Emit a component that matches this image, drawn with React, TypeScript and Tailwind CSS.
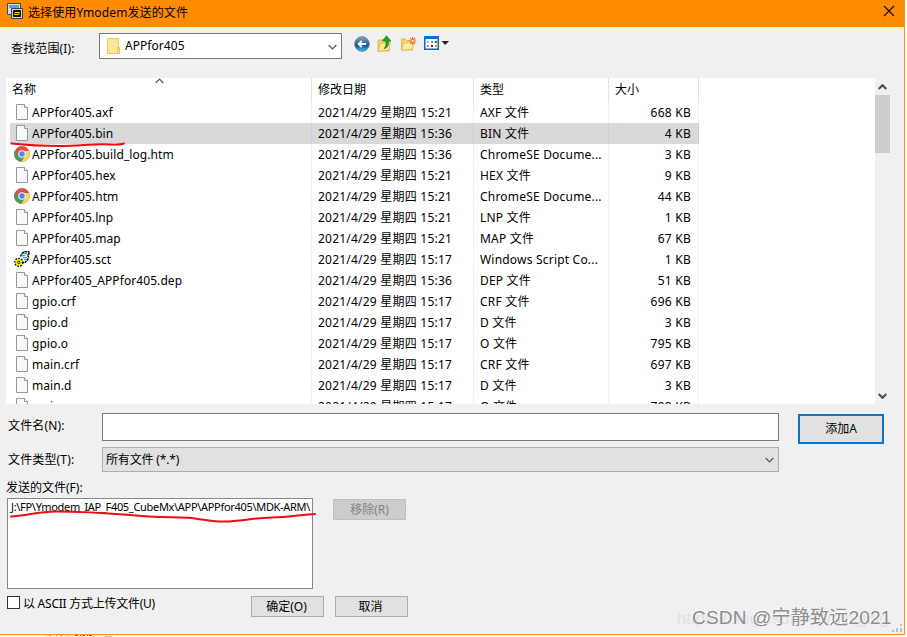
import React from "react";

type FileKind = "file" | "chrome" | "script";

interface FileEntry {
  name: string;
  kind: FileKind;
  time: string;
  type: string;
  size: string;
}

const files: FileEntry[] = [
  { name: "APPfor405.axf", kind: "file", time: "15:21", type: "AXF 文件", size: "668 KB" },
  { name: "APPfor405.bin", kind: "file", time: "15:36", type: "BIN 文件", size: "4 KB" },
  { name: "APPfor405.build_log.htm", kind: "chrome", time: "15:36", type: "ChromeSE Docume...", size: "3 KB" },
  { name: "APPfor405.hex", kind: "file", time: "15:21", type: "HEX 文件", size: "9 KB" },
  { name: "APPfor405.htm", kind: "chrome", time: "15:21", type: "ChromeSE Docume...", size: "44 KB" },
  { name: "APPfor405.lnp", kind: "file", time: "15:21", type: "LNP 文件", size: "1 KB" },
  { name: "APPfor405.map", kind: "file", time: "15:21", type: "MAP 文件", size: "67 KB" },
  { name: "APPfor405.sct", kind: "script", time: "15:17", type: "Windows Script Co...", size: "1 KB" },
  { name: "APPfor405_APPfor405.dep", kind: "file", time: "15:36", type: "DEP 文件", size: "51 KB" },
  { name: "gpio.crf", kind: "file", time: "15:17", type: "CRF 文件", size: "696 KB" },
  { name: "gpio.d", kind: "file", time: "15:17", type: "D 文件", size: "3 KB" },
  { name: "gpio.o", kind: "file", time: "15:17", type: "O 文件", size: "795 KB" },
  { name: "main.crf", kind: "file", time: "15:17", type: "CRF 文件", size: "697 KB" },
  { name: "main.d", kind: "file", time: "15:17", type: "D 文件", size: "3 KB" },
  { name: "main.o", kind: "file", time: "15:17", type: "O 文件", size: "798 KB" },
];

function FileIcon({ kind }: { kind: FileKind }) {
  if (kind === "chrome") {
    return (
      <svg width="16" height="16" viewBox="0 0 16 16" className="-mt-[2px]">
        <circle cx="8" cy="8" r="7.9" fill="#d2544a" />
        <path d="M1.1 4.1A7.9 7.9 0 0 0 7.3 15.9L11.2 9.8 8 8 4.8 9.8Z" fill="#4c9a62" />
        <path d="M15.300 5A7.900 7.900 0 0 1 7.200 15.900L11.300 9.800 10 5Z" fill="#f7d567" />
        <circle cx="8" cy="8" r="3.8" fill="#f4f4f4" />
        <circle cx="8" cy="8" r="2.7" fill="#4f86ec" />
      </svg>
    );
  }
  if (kind === "script") {
    return (
      <svg width="16" height="16" viewBox="0 0 16 16" className="-mt-[1px]">
        <path d="M8 1.5h6.500L13 4l2 2v4l-3 2H8l1-3-2-3Z" fill="#fff" />
        <path
          d="M6.500 5.500 8 2.500 10 .800h5.500M15.500 2 13.500 4 14.500 6 13.500 9 11 11.500H9"
          fill="none"
          stroke="#000"
          strokeWidth="1.500"
          strokeDasharray="2.500 .7"
        />
        <path d="M9 2.700h4M7.500 4.700h4M9 6.700h4M10 8.700h3" stroke="#2bb3c0" strokeWidth="1.300" />
        <circle cx="4.800" cy="11.300" r="3.900" fill="#f7ee00" stroke="#000" strokeWidth="1.500" strokeDasharray="1.800 1.100" />
        <circle cx="4.800" cy="11.300" r="3.200" fill="#f7ee00" />
        <circle cx="4.800" cy="11.300" r="1.200" fill="#fff" stroke="#000" />
      </svg>
    );
  }
  return (
    <svg width="16" height="16" viewBox="0 0 16 16" className="-mt-[2px]">
      <path d="M2.5 .5h8l3 3v12h-11Z" fill="#f8fafa" stroke="#979797" />
      <path d="M10.5 .5v3h3" fill="#fff" stroke="#979797" />
    </svg>
  );
}

function Chevron({ up = false, bold = false }: { up?: boolean; bold?: boolean }) {
  return (
    <svg width="9" height="6" viewBox="0 0 9 6" className="shrink-0">
      <path
        d={up ? "M.7 5 4.5 1.2 8.3 5" : "M.7 1 4.5 4.8 8.3 1"}
        fill="none"
        stroke={bold ? "#505050" : "#555"}
        strokeWidth={bold ? 2.2 : 1.2}
      />
    </svg>
  );
}

function TitleBar() {
  return (
    <div className="flex h-[27px] items-center bg-[#ff8c00] pl-[7px] pr-[9px]">
      <svg width="16" height="16" viewBox="0 0 16 16" className="-mt-[5px]">
        <path d="M.5 .5h13v11H.5Z" fill="#d9dde2" stroke="#34495f" />
        <path d="M2 2h10v3H2Z" fill="#5f9bff" />
        <path d="M4.5 5.5h11v10h-11Z" fill="#d5d5d5" stroke="#35404d" />
        <path d="M6.5 7.5h7v6h-7Z" fill="#111" stroke="#111" />
        <path d="M8 9h5l-1 3H7Z" fill="#ffd23c" />
        <path d="M8 10.5h4" stroke="#222" />
      </svg>
      <span className="-mt-[1px] ml-[5px] flex-1 tracking-[0.12px]">选择使用Ymodem发送的文件</span>
      <svg width="12" height="12" viewBox="0 0 12 12" className="-mt-[5px]">
        <path d="M1 1 11 11M11 1 1 11" stroke="#111" strokeWidth="1.2" />
      </svg>
    </div>
  );
}

function LookIn() {
  return (
    <div className="flex h-[51px] items-start pl-[11px] pt-[6px]">
      <span className="mt-[7px] w-[88px] tracking-[0.15px]">查找范围(I):</span>
      <div className="flex h-[26px] w-[243px] items-center border border-[#7a7a7a] bg-white pl-[7px] pr-[4px]">
        <svg width="13" height="16" viewBox="0 0 13 16">
          <path d="M.5 .5h11v15H.5Z" fill="#ffe69a" stroke="#eccb56" />
          <path d="M10.5 9.5h2v6h-2Z" fill="#ffe080" stroke="#e6c34d" />
        </svg>
        <span className="ml-[5px] flex-1 tracking-[0.05px]">APPfor405</span>
        <span className="mt-[2px] flex">
          <Chevron />
        </span>
      </div>
      <div className="ml-[12px] mt-[3px] flex items-start">
        <svg width="16" height="16" viewBox="0 0 16 16">
          <defs>
            <linearGradient id="back" x1="0" y1="0" x2="0" y2="1">
              <stop offset="0" stopColor="#8fa9c0" />
              <stop offset=".48" stopColor="#2b6193" />
              <stop offset=".6" stopColor="#0a5d9c" />
              <stop offset="1" stopColor="#3ac6f2" />
            </linearGradient>
          </defs>
          <circle cx="8" cy="8" r="7.4" fill="url(#back)" stroke="#6d8599" strokeWidth=".8" />
          <path d="M12.3 8H4.8M7.8 4.9 4.6 8l3.2 3.1" fill="none" stroke="#fff" strokeWidth="1.8" />
        </svg>
        <svg width="16" height="18" viewBox="0 0 16 18" className="-mt-[1px] ml-[7px]">
          <path d="M1 5h4l1-1h6v12H1Z" fill="#f5d668" stroke="#d8b548" strokeWidth=".8" />
          <path d="M1 16.500 3 8h5l1-1h4.500L12 15Z" fill="#ffe994" stroke="#d8b548" strokeWidth=".8" />
          <path d="M7 13.500c2-1.500 2.300-4 1.800-7.500H5.600L9.500 .8 13.800 6h-2.400c.3 5-1 7-4.400 7.500Z" fill="#26a326" stroke="#16791b" strokeWidth=".7" />
        </svg>
        <svg width="17" height="16" viewBox="0 0 17 16" className="ml-[7px]">
          <path d="M1.500 3h4l1 1.500h6V14h-11Z" fill="#f4d46c" stroke="#d6b24b" strokeWidth=".8" />
          <path d="M1.500 14.500 3.500 7H8l1-1h5l-1.500 7Z" fill="#ffeaa0" stroke="#dfbb52" strokeWidth=".8" />
          <path d="M12.500 1v8M8.800 5h7.500M10 2.200l5.400 5.400M15.300 2 10 7.600" stroke="#f6663a" strokeWidth="1.200" />
          <circle cx="12.500" cy="5" r="1.300" fill="#ffe17b" />
        </svg>
        <svg width="25" height="15" viewBox="0 0 25 15" className="ml-[7px]">
          <path d="M.75 .75h13.500v12.500H.75Z" fill="#fff" stroke="#0867c8" strokeWidth="1.500" />
          <path d="M0 0h15v3H0Z" fill="#0b6ed1" />
          <path d="M3 5h2v2H3Z" fill="#b0b0bd" />
          <path d="M7 5h2v2H7Z" fill="#9090c8" />
          <path d="M11 5h2v2h-2Z" fill="#208040" />
          <path d="M3 9h2v2H3Z" fill="#ff7356" />
          <path d="M7 9h2v2H7Z" fill="#123f9c" />
          <path d="M11 9h2v2h-2Z" fill="#d5a700" />
          <path d="M17.500 5h7.500l-3.800 4Z" fill="#222" />
        </svg>
      </div>
    </div>
  );
}

function FileList() {
  return (
    <div className="ml-[6px] mr-[14px] flex h-[326px]">
      <div className="w-[869px] overflow-hidden bg-white">
        <div className="flex h-[24px] w-[693px] leading-[24px]">
          <div className="relative w-[306px] border-r border-[#e2e2e2] pl-[6px]">
            名称
            <span className="absolute left-[149px] top-0 flex">
              <Chevron up />
            </span>
          </div>
          <div className="w-[162px] border-r border-[#e2e2e2] pl-[6px]">修改日期</div>
          <div className="w-[135px] border-r border-[#e2e2e2] pl-[6px]">类型</div>
          <div className="w-[90px] border-r border-[#e2e2e2] pl-[6px]">大小</div>
        </div>
        {files.map((file, index) => (
          <div key={file.name} className="flex h-[21px] w-[693px] pl-[4px] leading-[22px]">
            <div
              className={`flex w-full whitespace-nowrap ${
                index === 1 ? "bg-[#d9d9d9] *:border-[#c5d2dc]" : "*:border-[#eaf2fb]"
              }`}
            >
              <div className="flex h-[21px] w-[302px] items-center border-r pl-[4px]">
                <FileIcon kind={file.kind} />
                <span className="ml-[2px] leading-[20px] tracking-[0.08px]">{file.name}</span>
              </div>
              <div className="h-[21px] w-[162px] border-r pl-[6px] tracking-[0.22px]">
                2021/4/29 星期四 {file.time}
              </div>
              <div className="h-[21px] w-[135px] border-r pl-[6px] tracking-[0.2px]">{file.type}</div>
              <div className="h-[21px] w-[90px] border-r pr-[7px] text-right tracking-[0.25px]">{file.size}</div>
            </div>
          </div>
        ))}
      </div>
      <div className="flex w-[15px] flex-col items-center justify-between pb-[5px] pt-[6px]">
        <div className="flex w-full flex-col items-center gap-[5px]">
          <Chevron up bold />
          <div className="h-[58px] w-full bg-[#cdcdcd]" />
        </div>
        <Chevron bold />
      </div>
    </div>
  );
}

function FileFields() {
  return (
    <div className="flex h-[75px] pl-[8px] pt-[9px]">
      <div className="w-[94px] tracking-[0.15px]">
        <div className="h-[34px] pt-[4px]">文件名(N):</div>
        <div className="pt-[4px]">文件类型(T):</div>
      </div>
      <div className="flex w-[677px] flex-col gap-[6px]">
        <div className="h-[28px] border border-[#7a7a7a] bg-white" />
        <div className="flex h-[25px] items-center justify-between border border-[#adadad] bg-[#e1e1e1] pl-[3px] pr-[4px]">
          <span className="tracking-[-0.15px]">所有文件 (*.*)</span>
          <Chevron />
        </div>
      </div>
      <button className="ml-[19px] mt-[1px] h-[30px] w-[86px] border-2 border-[#0078d7] bg-[#e1e1e1]">
        添加A
      </button>
    </div>
  );
}

function SendFiles() {
  return (
    <div className="flex-1 pl-[7px]">
      <div className="-ml-[1px] h-[19px]">发送的文件(F):</div>
      <div className="flex">
        <div className="h-[91px] w-[306px] whitespace-nowrap border border-[#828790] bg-white pl-[3px] text-[11px] leading-[16px] tracking-[-0.31px]">
          J:\FP\Ymodem_IAP_F405_CubeMx\APP\APPfor405\MDK-ARM\
        </div>
        <button className="ml-[20px] mt-[1px] h-[21px] w-[73px] border border-[#bfbfbf] bg-[#cccccc] leading-[20px] text-[#838383]">
          移除(R)
        </button>
      </div>
      <div className="mt-[7px] flex h-[21px] items-start">
        <div className="h-[13px] w-[13px] border border-[#333] bg-white" />
        <span className="-mt-[1px] ml-[3px] w-[228px] tracking-[-0.25px]">以 ASCII 方式上传文件(U)</span>
        <button className="h-[21px] w-[73px] border border-[#adadad] bg-[#e1e1e1] pr-[2px] leading-[20px]">
          确定(O)
        </button>
        <button className="ml-[11px] h-[21px] w-[73px] border border-[#adadad] bg-[#e1e1e1] pr-[2px] leading-[20px]">
          取消
        </button>
      </div>
    </div>
  );
}

export default function App() {
  return (
    <div className="relative h-[637px] w-[907px] overflow-hidden bg-white font-['Noto_Sans','Noto_Sans_CJK_SC',sans-serif] text-[12px] leading-[18px] text-black">
      <div className="flex h-[635px] w-[905px] flex-col border-b border-r border-[#f7941d] bg-[#f0f0f0]">
        <TitleBar />
        <LookIn />
        <FileList />
        <FileFields />
        <SendFiles />
      </div>
      <div className="flex h-[2px] pl-[45px]">
        <svg width="68" height="2" viewBox="0 0 68 2">
          <path d="M0 0h68v2H0Z" fill="#eee" />
          <path d="M4 .5h22" stroke="#aaa" strokeDasharray="2 5 1 3" />
          <path d="M30 .5h19" stroke="#666" strokeDasharray="3 2 1 1" />
          <path d="M60 1.500h7" stroke="#ccc" />
        </svg>
      </div>

      {/* hand drawn marks */}
      <svg width="907" height="637" className="pointer-events-none absolute left-0 top-0" fill="none">
        <path
          d="M11.500 143.500C25 145 42 146 60 146C80 146 95 143.500 110 144.500C118 145 121 144.500 124 143.500"
          stroke="#f00a14"
          strokeWidth="1.900"
          strokeLinecap="round"
        />
        <path
          d="M11 516.500C25 516 38 511.500 56 511.500C80 511.500 105 513 130 515C155 517.500 175 517 192 518C205 520 212 521.500 224 521.500C240 521.500 252 518 272 517.500C290 517.500 296 515 315 514"
          stroke="#f00a14"
          strokeWidth="2"
          strokeLinecap="round"
        />
        <path
          d="M900 624h2v2h-2ZM896 628h2v2h-2ZM900 628h2v2h-2ZM892 630h2v2h-2ZM896 630h2v2h-2ZM900 630h2v2h-2Z"
          fill="#bfbfbf"
        />
      </svg>
      <div className="absolute left-[677px] top-[609px] whitespace-nowrap font-['Liberation_Sans',sans-serif] text-[16px] leading-[20px] tracking-[0.3px] text-[#e0e0e0]">
        https://blog.csdn.net/ningjing
      </div>
      <div className="absolute left-[692px] top-[606px] whitespace-nowrap font-['Liberation_Sans','Noto_Sans_CJK_SC',sans-serif] text-[19px] leading-[24px] tracking-[0.2px] text-[#8d8d8d] [text-shadow:-1px_-1px_0_#f8f8f8]">
        CSDN @宁静致远2021
      </div>
    </div>
  );
}
